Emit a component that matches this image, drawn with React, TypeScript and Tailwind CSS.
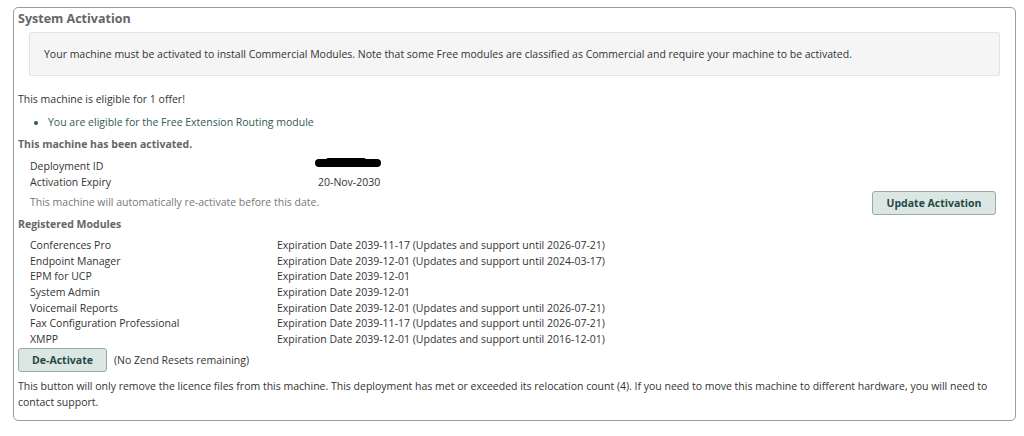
import React from 'react';

const modules: [string, string][] = [
  ['Conferences Pro', 'Expiration Date 2039-11-17 (Updates and support until 2026-07-21)'],
  ['Endpoint Manager', 'Expiration Date 2039-12-01 (Updates and support until 2024-03-17)'],
  ['EPM for UCP', 'Expiration Date 2039-12-01'],
  ['System Admin', 'Expiration Date 2039-12-01'],
  ['Voicemail Reports', 'Expiration Date 2039-12-01 (Updates and support until 2026-07-21)'],
  ['Fax Configuration Professional', 'Expiration Date 2039-11-17 (Updates and support until 2026-07-21)'],
  ['XMPP', 'Expiration Date 2039-12-01 (Updates and support until 2016-12-01)'],
];

const btn =
  'rounded-[3px] border border-[#9aaba6] bg-[#dce6e2] font-bold text-[#1f4a45] text-[10.5px] leading-none';

export default function App() {
  return (
    <div className="h-[436px] w-[1024px] bg-white pt-[7px] pl-[13px] font-['Open_Sans',sans-serif] text-[10.5px] leading-[16px] text-[#333]">
      <div className="h-[414px] w-[1003px] rounded-[5px] border border-[#8fa39e] px-[4px]">
        <h3 className="pt-[2px] text-[12.5px] font-bold leading-[17px] text-[#666]">System Activation</h3>

        <div className="mt-[5px] ml-[11px] mr-[11px] flex h-[44px] items-center rounded-[2px] border border-[#e3e3e3] bg-[#f5f5f5] pl-[14px] text-[#333]">
          Your machine must be activated to install Commercial Modules. Note that some Free modules are classified as Commercial and require your machine to be activated.
        </div>

        <p className="mt-[15px]">This machine is eligible for 1 offer!</p>
        <ul className="mt-[7px] list-disc pl-[30px] text-[#2f5b57]">
          <li>You are eligible for the Free Extension Routing module</li>
        </ul>

        <p className="mt-[6px] font-bold text-[#666]">This machine has been activated.</p>

        <div className="mt-[6px] flex items-end">
          <div className="pl-[12px]">
            <div className="flex">
              <span className="w-[288px]">Deployment ID</span>
              <span className="relative inline-block w-[62px]">
                <span className="absolute left-[-3px] top-[1px] h-[8px] w-[66px] rounded-full bg-black" />
                <span className="absolute left-[8px] top-[0px] h-[4px] w-[40px] rounded-full bg-black" />
              </span>
            </div>
            <div className="flex">
              <span className="w-[288px]">Activation Expiry</span>
              <span>20-Nov-2030</span>
            </div>
            <p className="mt-[4px] text-[#777]">This machine will automatically re-activate before this date.</p>
          </div>
          <div className="flex-1" />
          <button className={`${btn} -mb-[5px] mr-[15px] h-[24px] w-[124px]`}>Update Activation</button>
        </div>

        <p className="mt-[6px] font-bold text-[#666]">Registered Modules</p>

        <div className="mt-[5px] pl-[12px]">
          {modules.map(([name, exp]) => (
            <div key={name} className="flex h-[15.7px]">
              <span className="w-[247px]">{name}</span>
              <span>{exp}</span>
            </div>
          ))}
        </div>

        <div className="mt-[1px] flex items-center">
          <button className={`${btn} h-[24px] w-[89px]`}>De-Activate</button>
          <span className="ml-[7px]">(No Zend Resets remaining)</span>
        </div>

        <p className="mt-[6px]">
          This button will only remove the licence files from this machine. This deployment has met or exceeded its relocation count (4). If you need to move this machine to different hardware, you will need to contact support.
        </p>
      </div>
    </div>
  );
}
